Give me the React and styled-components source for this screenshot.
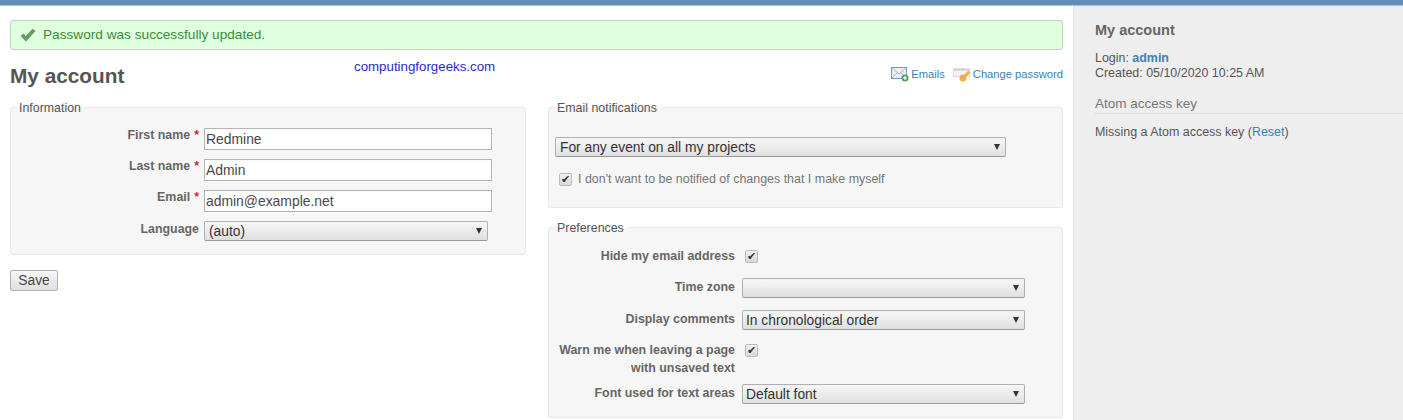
import { createGlobalStyle, styled } from "styled-components";

const GlobalStyle = createGlobalStyle`
  html, body {
    margin: 0;
    padding: 0;
    background: #fff;
    overflow: hidden;
  }
  body {
    font-family: "Liberation Sans", Arial, sans-serif;
    font-size: 12px;
    color: #484848;
  }
`;

const Page = styled.div`
  width: 1403px;
  height: 420px;
  display: flex;
  flex-direction: column;
  overflow: hidden;
`;
const TopBar = styled.div`
  height: 5px;
  flex: none;
  background: #628db6;
  border-bottom: 1px solid #a9c3dc;
`;
const Body = styled.div`
  flex: 1;
  display: flex;
  min-height: 0;
`;
const Main = styled.main`
  position: relative;
  width: 1073px;
  box-sizing: border-box;
  padding: 14px 10px 0;
`;
const Sidebar = styled.aside`
  flex: 1;
  background: #eeeeee;
  border-left: 1px solid #e4e4e4;
  padding: 16px 0 0 21px;
`;
const Flash = styled.div`
  height: 30px;
  box-sizing: border-box;
  display: flex;
  align-items: center;
  gap: 7px;
  padding: 0 0 1px 9px;
  background: #dfffdf;
  border: 1px solid #b5d8b5;
  border-radius: 3px;
  color: #3c8c3c;
  font-size: 13.65px;
`;
const Watermark = styled.div`
  position: absolute;
  left: 354px;
  top: 53px;
  color: #2a2ad0;
  font-size: 13.3px;
`;
const Header = styled.div`
  display: flex;
  justify-content: space-between;
  align-items: flex-start;
  height: 49px;
`;
const Title = styled.h2`
  margin: 13px 0 0;
  font-size: 20.8px;
  line-height: 25px;
  font-weight: bold;
  color: #555;
`;
const Links = styled.div`
  display: flex;
  gap: 8px;
  margin-top: 16px;
`;
const IconLink = styled.a`
  display: flex;
  align-items: center;
  gap: 2px;
  color: #3e7fb5;
  font-size: 11.2px;
  line-height: 14px;
`;
const Columns = styled.div`
  display: grid;
  grid-template-columns: 516px 515px;
  column-gap: 22px;
  align-items: start;
`;
const Column = styled.div`
  display: flex;
  flex-direction: column;
`;
const Box = styled.fieldset`
  margin: 0 0 ${({ $gap }) => $gap || 0}px;
  min-width: 0;
  box-sizing: border-box;
  height: ${({ $height }) => $height}px;
  padding: ${({ $top }) => $top}px 0 0;
  background: #f6f6f6;
  border: 1px solid #e8e8e8;
  border-radius: 3px;
`;
const Legend = styled.legend`
  margin-left: 6px;
  padding: 2px 4px 0 2px;
  font-size: 12.4px;
  line-height: 14px;
  color: #555;
`;
const Inset = styled.div`
  padding-left: 6px;
`;
const Row = styled.div`
  display: flex;
  align-items: flex-start;
  gap: ${({ $gap }) => $gap || 5}px;
  height: ${({ $height }) => $height}px;
`;
const Label = styled.label`
  width: ${({ $width }) => $width}px;
  flex: none;
  box-sizing: border-box;
  text-align: right;
  font-weight: bold;
  font-size: 12.4px;
  line-height: ${({ $line }) => $line || 18}px;
  color: #666;
  padding-top: ${({ $top }) => $top || 0}px;
`;
const Star = styled.span`
  color: #bb3333;
  margin-left: 4px;
`;
const TextField = styled.input`
  width: 288px;
  height: 22px;
  box-sizing: border-box;
  padding: 1px 1px;
  background: #fff;
  border: 1px solid #b4b4b4;
  box-shadow: inset 0 0 1px #ccc;
  font-family: inherit;
  font-size: 13.9px;
  color: #484848;
  outline: none;
`;
const SelectWrap = styled.div`
  position: relative;
  width: ${({ $width }) => $width}px;
  height: 20px;
  flex: none;

  &::after {
    content: "";
    position: absolute;
    right: 6px;
    top: 7px;
    border-left: 3.5px solid transparent;
    border-right: 3.5px solid transparent;
    border-top: 6px solid #333;
    pointer-events: none;
  }
`;
const Select = styled.select`
  appearance: none;
  width: 100%;
  height: 100%;
  box-sizing: border-box;
  padding: 1px ${({ $inset }) => $inset || 4}px;
  background: linear-gradient(#f7f7f7, #e0e0e0);
  border: 1px solid #b0b0b0;
  border-bottom-color: #999;
  border-radius: 2px;
  font-family: inherit;
  font-size: 13.8px;
  color: #333;
  outline: none;
`;
const Check = styled.input`
  appearance: none;
  position: relative;
  width: 13px;
  height: 13px;
  margin: ${({ $margin }) => $margin || "0"};
  flex: none;
  background: linear-gradient(#f2f2f2, #d8d8d8);
  border: 1px solid #bbb;
  border-radius: 2px;

  &::after {
    content: "✔";
    position: absolute;
    left: 1px;
    top: -1px;
    font-size: 11px;
    line-height: 13px;
    color: #333;
  }
`;
const NotifyLine = styled.div`
  display: flex;
  align-items: center;
  gap: 6px;
  margin: 15px 0 0 4px;
  font-size: 12.45px;
  color: #777;
`;
const SaveButton = styled.button`
  align-self: flex-start;
  margin-top: 15px;
  width: 48px;
  height: 21px;
  padding: 0;
  background: linear-gradient(#f7f7f7, #e0e0e0);
  border: 1px solid #b0b0b0;
  border-radius: 2px;
  font-family: inherit;
  font-size: 13.8px;
  color: #484848;
`;
const SideTitle = styled.h3`
  margin: 0 0 13px;
  font-size: 14.5px;
  line-height: 16px;
  font-weight: bold;
  color: #666;
`;
const SideText = styled.p`
  margin: 0;
  font-size: 12.45px;
  line-height: 15px;
  color: #555;
`;
const SideLink = styled.a`
  color: #3e7fb5;
  font-weight: ${({ $bold }) => ($bold ? "bold" : "normal")};
`;
const SideHeading = styled.h4`
  margin: 15px 0 11px;
  padding-bottom: 2px;
  font-size: 13.5px;
  line-height: 15px;
  font-weight: normal;
  color: #777;
  border-bottom: 1px solid #dcdcdc;
`;

const CheckIcon = () => (
  <svg width="16" height="14" viewBox="0 0 16 14">
    <path d="M0.5 8l3-2.5 2.2 2.6L12.6 0.8l3 2.2L6 13.5z" fill="#5f9f5f" />
  </svg>
);

const MailIcon = () => (
  <svg width="18" height="16" viewBox="0 0 18 16">
    <rect x="0.5" y="1.5" width="15" height="11" fill="#e8f0f8" stroke="#6f9bc8" />
    <path d="M1 2l7 6 7-6M1 12l5-5M15 12l-5-5" fill="none" stroke="#9dbbd8" />
    <circle cx="14" cy="12" r="3.5" fill="#4fa04f" />
    <path d="M12 12h4M14 10v4" stroke="#fff" strokeWidth="1.2" />
  </svg>
);

const KeyIcon = () => (
  <svg width="18" height="16" viewBox="0 0 18 16">
    <rect x="0.5" y="2.5" width="16" height="8" fill="#f4f4f4" stroke="#dcdcdc" />
    <path d="M1 3h15v2H1z" fill="#d8d8d8" />
    <circle cx="10" cy="12" r="3.5" fill="#e5b24a" />
    <path d="M10 12l6.5-6.5" stroke="#e5b24a" strokeWidth="3" />
  </svg>
);

const Field = ({ label, value }) => (
  <Row $height={31}>
    <Label $width={188} $line={14}>
      {label}
      <Star>*</Star>
    </Label>
    <TextField defaultValue={value} />
  </Row>
);

const App = () => (
  <Page>
    <GlobalStyle />
    <TopBar />
    <Body>
      <Main>
        <Flash>
          <CheckIcon />
          Password was successfully updated.
        </Flash>
        <Watermark>computingforgeeks.com</Watermark>
        <Header>
          <Title>My account</Title>
          <Links>
            <IconLink>
              <MailIcon />
              Emails
            </IconLink>
            <IconLink>
              <KeyIcon />
              Change password
            </IconLink>
          </Links>
        </Header>
        <Columns>
          <Column>
            <Box $height={156} $top={13}>
              <Legend>Information</Legend>
              <Field label="First name" value="Redmine" />
              <Field label="Last name" value="Admin" />
              <Field label="Email" value="admin@example.net" />
              <Row $height={20}>
                <Label $width={188} $line={16}>Language</Label>
                <SelectWrap $width={284}>
                  <Select defaultValue="auto">
                    <option value="auto">(auto)</option>
                  </Select>
                </SelectWrap>
              </Row>
            </Box>
            <SaveButton>Save</SaveButton>
          </Column>
          <Column>
            <Box $height={109} $gap={11} $top={22}>
              <Legend>Email notifications</Legend>
              <Inset>
                <SelectWrap $width={451}>
                  <Select defaultValue="all">
                    <option value="all">For any event on all my projects</option>
                  </Select>
                </SelectWrap>
                <NotifyLine>
                  <Check type="checkbox" defaultChecked />
                  I don't want to be notified of changes that I make myself
                </NotifyLine>
              </Inset>
            </Box>
            <Box $height={199} $top={11}>
              <Legend>Preferences</Legend>
              <Row $height={32} $gap={10}>
                <Label $width={186} $top={1}>Hide my email address</Label>
                <Check type="checkbox" defaultChecked $margin="4px 0 0" />
              </Row>
              <Row $height={32} $gap={7}>
                <Label $width={186}>Time zone</Label>
                <SelectWrap $width={283}>
                  <Select defaultValue="" $inset={3}>
                    <option value=""></option>
                  </Select>
                </SelectWrap>
              </Row>
              <Row $height={31} $gap={7}>
                <Label $width={186}>Display comments</Label>
                <SelectWrap $width={283}>
                  <Select defaultValue="asc" $inset={3}>
                    <option value="asc">In chronological order</option>
                  </Select>
                </SelectWrap>
              </Row>
              <Row $height={43} $gap={10}>
                <Label $width={186}>
                  Warn me when leaving a page
                  <br />
                  with unsaved text
                </Label>
                <Check type="checkbox" defaultChecked $margin="3px 0 0" />
              </Row>
              <Row $height={20} $gap={7}>
                <Label $width={186}>Font used for text areas</Label>
                <SelectWrap $width={283}>
                  <Select defaultValue="default" $inset={3}>
                    <option value="default">Default font</option>
                  </Select>
                </SelectWrap>
              </Row>
            </Box>
          </Column>
        </Columns>
      </Main>
      <Sidebar>
        <SideTitle>My account</SideTitle>
        <SideText>
          Login: <SideLink $bold>admin</SideLink>
          <br />
          Created: 05/10/2020 10:25 AM
        </SideText>
        <SideHeading>Atom access key</SideHeading>
        <SideText>
          Missing a Atom access key (<SideLink>Reset</SideLink>)
        </SideText>
      </Sidebar>
    </Body>
  </Page>
);

export default App;
